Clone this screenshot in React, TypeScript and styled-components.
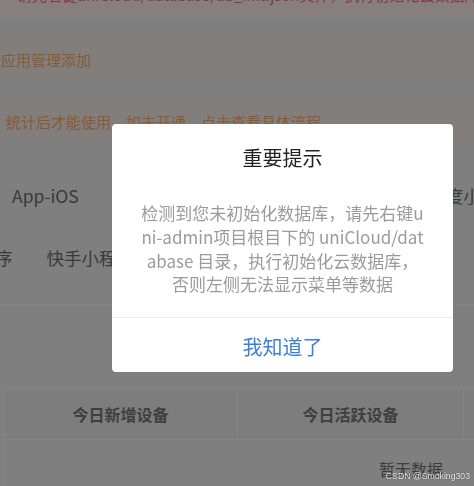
import React from "react";
import styled, { createGlobalStyle } from "styled-components";

const GlobalStyle = createGlobalStyle`
  html, body {
    margin: 0;
    padding: 0;
    overflow: hidden;
    background: #f0f0f0;
  }
  body {
    font-family: "Noto Sans CJK SC", "Noto Sans", sans-serif;
  }
  #root {
    width: 474px;
    height: 486px;
    overflow: hidden;
    position: relative;
  }
`;

const Page = styled.div`
  display: flex;
  flex-direction: column;
  width: 474px;
  margin-top: -23px;
`;

const Notice = styled.div<{ $tone: "danger" | "warning" }>`
  height: 42px;
  box-sizing: border-box;
  padding: ${(p) => (p.$tone === "danger" ? "7px 0 13px" : "10px 0")};
  margin-bottom: 20px;
  background: ${(p) => (p.$tone === "danger" ? "#ffeef1" : "#f5efe8")};
  color: ${(p) => (p.$tone === "danger" ? "#ff6b78" : "#ffac64")};
  font-size: 15px;
  line-height: 22px;
  white-space: nowrap;
  overflow: hidden;
`;

const NoticeText = styled.span<{ $indent: number }>`
  display: block;
  margin-left: ${(p) => p.$indent}px;
`;

const Tabs = styled.div`
  margin-top: 2px;
  padding-bottom: 16px;
  border-bottom: 1px solid #fbfbfb;
  overflow: hidden;
`;

const TabRow = styled.div<{ $offset: number }>`
  display: flex;
  gap: 34px;
  height: 62px;
  align-items: center;
  margin-left: ${(p) => p.$offset}px;
  white-space: nowrap;
`;

const Tab = styled.span`
  flex: none;
  font-size: 17.5px;
  line-height: 62px;
  color: #6e6e6e;
`;

const ChartCard = styled.div`
  margin-top: 82px;
  overflow: hidden;
`;

const Table = styled.div`
  display: grid;
  grid-template-columns: 234px 226px 354px;
  width: 815px;
  margin-left: 3px;
  border-top: 1px solid #fbfbfb;
  border-left: 1px solid #fbfbfb;
`;

const HeadCell = styled.div`
  box-sizing: border-box;
  height: 51px;
  display: flex;
  align-items: center;
  justify-content: center;
  background: #ececec;
  border-right: 1px solid #fbfbfb;
  border-bottom: 1px solid #fbfbfb;
  font-size: 16px;
  font-weight: 700;
  color: #787878;
`;

const EmptyRow = styled.div`
  grid-column: 1 / -1;
  padding-top: 18px;
  height: 60px;
  text-align: center;
  font-size: 16px;
  line-height: 22px;
  color: #747474;
`;

const Mask = styled.div`
  position: fixed;
  inset: 0;
  background: rgba(0, 0, 0, 0.47);
  z-index: 10;
`;

const Dialog = styled.div`
  position: absolute;
  left: 112px;
  top: 124px;
  width: 341px;
  background: #ffffff;
  border-radius: 4px;
  overflow: hidden;
  text-align: center;
`;

const DialogHead = styled.div`
  padding: 20px 26px 0;
`;

const DialogTitle = styled.div`
  font-size: 20px;
  line-height: 28px;
  color: #222222;
`;

const DialogBody = styled.div`
  padding: 29px 20px 21px;
  font-size: 17px;
  line-height: 23.8px;
  color: #9b9b9b;
`;

const BodyLine = styled.span`
  display: block;
  white-space: nowrap;
`;

const DialogFoot = styled.div`
  border-top: 1px solid #ececec;
  display: flex;
`;

const FootButton = styled.div`
  flex: 1;
  font-size: 20px;
  line-height: 54px;
  padding-top: 2px;
  height: 54px;
  box-sizing: border-box;
  color: #3b7ee3;
`;

const Watermark = styled.div`
  position: fixed;
  right: 4px;
  bottom: 5px;
  z-index: 20;
  font-family: "Liberation Sans", Arial, sans-serif;
  font-size: 8.7px;
  line-height: 10px;
  color: rgba(255, 255, 255, 0.9);
  text-shadow: 0 0 1px rgba(0, 0, 0, 0.7);
`;

const bodyLines = [
  "检测到您未初始化数据库，请先右键u",
  "ni-admin项目根目下的 uniCloud/dat",
  "abase 目录，执行初始化云数据库，",
  "否则左侧无法显示菜单等数据",
];

export default function App() {
  return (
    <>
      <GlobalStyle />
      <Page>
        <Notice $tone="danger">
          <NoticeText $indent={17}>
            请先右键uniCloud/database/db_init.json文件，执行初始化云数据库
          </NoticeText>
        </Notice>
        <Notice $tone="warning">
          <NoticeText $indent={1}>应用管理添加</NoticeText>
        </Notice>
        <Notice $tone="warning">
          <NoticeText $indent={6}>
            统计后才能使用，如未开通，点击查看具体流程
          </NoticeText>
        </Notice>
        <Tabs>
          <TabRow $offset={12}>
            <Tab>App-iOS</Tab>
            <Tab>App-Android</Tab>
            <Tab>H5</Tab>
            <Tab>微信小程序</Tab>
            <Tab>百度小程序</Tab>
          </TabRow>
          <TabRow $offset={-40}>
            <Tab>小程序</Tab>
            <Tab>快手小程序</Tab>
            <Tab>飞书小程序</Tab>
            <Tab>QQ小程序</Tab>
          </TabRow>
        </Tabs>
        <ChartCard>
          <Table>
            <HeadCell>今日新增设备</HeadCell>
            <HeadCell>今日活跃设备</HeadCell>
            <HeadCell>今日新增用户</HeadCell>
            <EmptyRow>暂无数据</EmptyRow>
          </Table>
        </ChartCard>
      </Page>
      <Mask>
        <Dialog>
          <DialogHead>
            <DialogTitle>重要提示</DialogTitle>
          </DialogHead>
          <DialogBody>
            {bodyLines.map((l) => (
              <BodyLine key={l}>{l}</BodyLine>
            ))}
          </DialogBody>
          <DialogFoot>
            <FootButton>我知道了</FootButton>
          </DialogFoot>
        </Dialog>
      </Mask>
      <Watermark>CSDN @Smoking303</Watermark>
    </>
  );
}
